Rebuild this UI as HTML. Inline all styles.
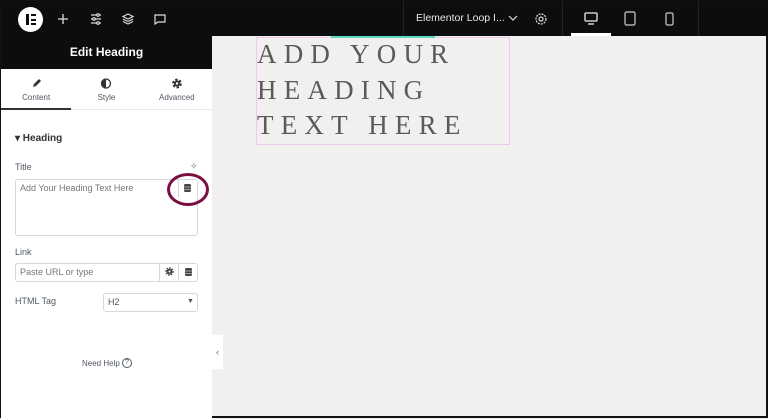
<!DOCTYPE html>
<html><head><style>
*{box-sizing:border-box;margin:0;padding:0}
body{width:768px;height:418px;overflow:hidden;background:#f1f0ef;font-family:"Liberation Sans",sans-serif;position:relative;border:1px solid #111;border-width:1px 2px 2px 1px}
.top{position:absolute;left:0;top:0;width:768px;height:35px;background:#0c0d0e}
.panel{position:absolute;left:0;top:35px;width:211px;height:383px;background:#fff}
.hdr{height:33px;background:#0c0d0e;color:#fff;font-weight:bold;font-size:12px;text-align:center;line-height:33px}
.tabs{height:41px;border-bottom:1px solid #e6e8ea;position:relative;display:flex}
.tab{flex:1;text-align:center;font-size:8px;color:#515962;padding-top:24px;position:relative}
.tab svg{position:absolute;left:50%;top:9px;transform:translateX(-50%)}
.lbl{position:absolute;font-size:9px;color:#515962}
.box{position:absolute;border:1px solid #d5d8dc;border-radius:3px;background:#fff}
</style></head><body>
<div class="top">
 <div style="position:absolute;left:17px;top:6px;width:25px;height:25px;border-radius:50%;background:#fff"></div>
 <div style="position:absolute;left:25px;top:13px;width:3px;height:11px;background:#0c0d0e"></div>
 <div style="position:absolute;left:30px;top:13px;width:5px;height:2px;background:#0c0d0e"></div>
 <div style="position:absolute;left:30px;top:17.5px;width:5px;height:2px;background:#0c0d0e"></div>
 <div style="position:absolute;left:30px;top:22px;width:5px;height:2px;background:#0c0d0e"></div>
 <svg style="position:absolute;left:55px;top:11px" width="14" height="14" stroke="#ddd" stroke-width="1.3" fill="none"><path d="M7 2v10M2 7h10"/></svg>
 <svg style="position:absolute;left:88px;top:11px" width="14" height="14" stroke="#ddd" stroke-width="1.2" fill="none"><path d="M2 3h10M2 7h10M2 11h10"/><circle cx="9" cy="3" r="1.3" fill="#0c0d0e"/><circle cx="5" cy="7" r="1.3" fill="#0c0d0e"/><circle cx="9" cy="11" r="1.3" fill="#0c0d0e"/></svg>
 <svg style="position:absolute;left:120px;top:11px" width="14" height="14" stroke="#ddd" stroke-width="1.2" fill="none"><path d="M7 2l5 2.5-5 2.5-5-2.5zM2 7l5 2.5 5-2.5M2 9.5l5 2.5 5-2.5"/></svg>
 <svg style="position:absolute;left:152px;top:11px" width="14" height="14" stroke="#ddd" stroke-width="1.2" fill="none"><path d="M2 3h10v7H5l-3 2z"/></svg>
 <div style="position:absolute;left:402px;top:0;width:1px;height:35px;background:#222"></div>
 <div style="position:absolute;left:415px;top:11px;color:#e8e8e8;font-size:10.5px">Elementor Loop I...</div>
 <svg style="position:absolute;left:507px;top:13px" width="10" height="8" stroke="#ddd" stroke-width="1.2" fill="none"><path d="M1 2l4 4 4-4"/></svg>
 <svg style="position:absolute;left:533px;top:11px" width="14" height="14" stroke="#ddd" stroke-width="1.2" fill="none"><circle cx="7" cy="7" r="2"/><circle cx="7" cy="7" r="5" stroke-dasharray="2 1"/></svg>
 <div style="position:absolute;left:561px;top:0;width:1px;height:35px;background:#222"></div>
 <svg style="position:absolute;left:582px;top:10px" width="16" height="14" stroke="#eee" stroke-width="1.3" fill="none"><rect x="2" y="2" width="12" height="8" rx="1"/><path d="M5 13h6"/></svg>
 <div style="position:absolute;left:570px;top:32px;width:40px;height:3px;background:#fff"></div>
 <svg style="position:absolute;left:622px;top:9px" width="14" height="17" stroke="#ccc" stroke-width="1.2" fill="none"><rect x="2" y="2" width="10" height="13" rx="1.5"/></svg>
 <svg style="position:absolute;left:663px;top:10px" width="12" height="16" stroke="#ccc" stroke-width="1.2" fill="none"><rect x="2" y="2" width="7" height="12" rx="1.5"/></svg>
 <div style="position:absolute;left:697px;top:0;width:1px;height:35px;background:#222"></div>
</div>
<div class="panel">
 <div class="hdr">Edit Heading</div>
 <div class="tabs">
  <div class="tab" style="border-bottom:2px solid #333;margin-bottom:-1px"><svg width="10" height="10"><path d="M2 9l1-3 5-5 2 2-5 5z" fill="#333"/></svg>Content</div>
  <div class="tab"><svg width="11" height="11"><circle cx="5.5" cy="5.5" r="4.5" fill="none" stroke="#333" stroke-width="1.3"/><path d="M5.5 1a4.5 4.5 0 0 0 0 9z" fill="#333"/></svg>Style</div>
  <div class="tab"><svg width="11" height="11"><circle cx="5.5" cy="5.5" r="3.6" fill="none" stroke="#333" stroke-width="2.6" stroke-dasharray="2.2 1.6"/><circle cx="5.5" cy="5.5" r="3" fill="#333"/><circle cx="5.5" cy="5.5" r="1.2" fill="#fff"/></svg>Advanced</div>
 </div>
 <div style="position:absolute;left:14px;top:97px;font-size:10px;font-weight:bold;color:#333">▾ Heading</div>
 <div class="lbl" style="left:14px;top:126px">Title</div>
 <div class="lbl" style="left:189px;top:125px;color:#666">✧</div>
 <div class="box" style="left:14px;top:143px;width:183px;height:57px"></div>
 <div class="lbl" style="left:19px;top:147px;color:#777">Add Your Heading Text Here</div>
 <div class="box" style="left:177px;top:144px;width:19px;height:17px;border-width:0 0 0 1px;border-radius:0"></div>
 <svg style="position:absolute;left:183px;top:148px" width="7" height="8"><rect width="7" height="8" rx="1.5" fill="#444"/><path d="M0 3h7M0 5.5h7" stroke="#fff" stroke-width=".6"/></svg>
 <div style="position:absolute;left:166px;top:137px;width:42px;height:33px;border:3px solid #7b0f44;border-radius:50%"></div>
 <div class="lbl" style="left:14px;top:211px">Link</div>
 <div class="box" style="left:14px;top:227px;width:183px;height:19px"></div>
 <div class="lbl" style="left:19px;top:231px;color:#777">Paste URL or type</div>
 <div style="position:absolute;left:158px;top:228px;width:1px;height:17px;background:#d5d8dc"></div>
 <div style="position:absolute;left:177px;top:228px;width:1px;height:17px;background:#d5d8dc"></div>
 <svg style="position:absolute;left:164px;top:231px" width="9" height="9"><circle cx="4.5" cy="4.5" r="2.8" fill="#444"/><circle cx="4.5" cy="4.5" r="3.4" fill="none" stroke="#444" stroke-width="1.6" stroke-dasharray="1.5 1.1"/><circle cx="4.5" cy="4.5" r="1" fill="#fff"/></svg>
 <svg style="position:absolute;left:184px;top:232px" width="7" height="8"><rect width="7" height="8" rx="1.5" fill="#444"/><path d="M0 3h7M0 5.5h7" stroke="#fff" stroke-width=".6"/></svg>
 <div class="lbl" style="left:14px;top:260px">HTML Tag</div>
 <div class="box" style="left:102px;top:257px;width:95px;height:19px"></div>
 <div class="lbl" style="left:107px;top:261px;color:#555">H2</div>
 <div class="lbl" style="left:186px;top:262px;font-size:7px;color:#555">▼</div>
 <div style="position:absolute;left:81px;top:323px;font-size:8px;color:#515962">Need Help</div>
 <div style="position:absolute;left:121px;top:322px;width:10px;height:10px;border:1px solid #515962;border-radius:50%;font-size:7px;text-align:center;line-height:8px;color:#515962">?</div>
</div>
<div style="position:absolute;left:211px;top:334px;width:11px;height:34px;background:#fff;font-size:9px;color:#666;line-height:34px;text-align:center">‹</div>
<div style="position:absolute;left:255px;top:36px;width:254px;height:108px;border:1px solid #f0c6f2"></div>
<div style="position:absolute;left:330px;top:35px;width:104px;height:2px;background:#5ed6c0"></div>
<div style="position:absolute;left:256px;top:36px;font-family:'Liberation Serif',serif;font-size:27px;line-height:35.5px;letter-spacing:7.2px;color:#5a5a5a;white-space:pre">ADD YOUR
HEADING
TEXT HERE</div>
</body></html>
